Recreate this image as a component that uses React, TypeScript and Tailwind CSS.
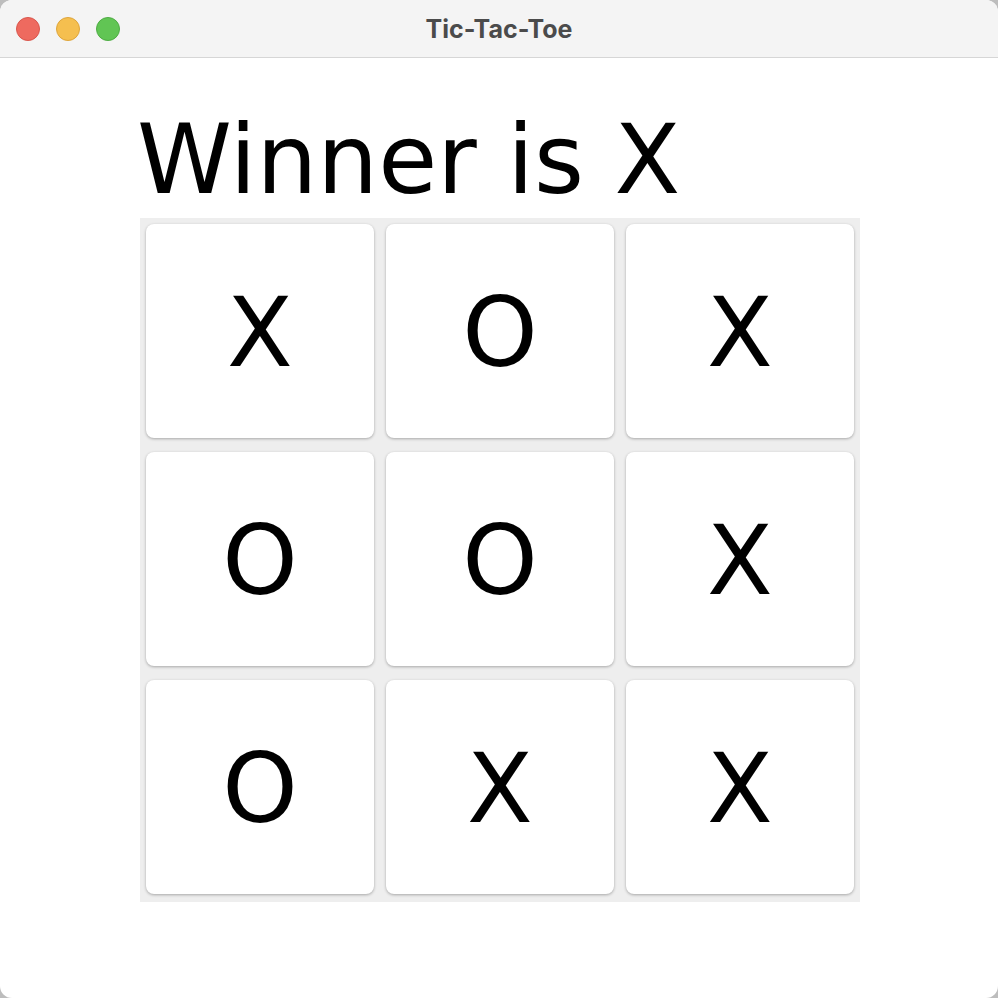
const board = ['X', 'O', 'X', 'O', 'O', 'X', 'O', 'X', 'X'];

export default function App() {
  return (
    <div className="h-[998px] w-[998px] bg-[#bdbdbd]">
      <div className="flex h-full w-full flex-col overflow-hidden rounded-[12px] bg-white">
        <div className="relative flex h-[58px] flex-none items-center border-b border-[#d6d6d6] bg-[#f4f4f4]">
          <div className="flex gap-[16px] pl-[16px]">
            <span className="h-[24px] w-[24px] rounded-full border border-[#d9564c] bg-[#ee6a5f]" />
            <span className="h-[24px] w-[24px] rounded-full border border-[#dea53b] bg-[#f5bf4f]" />
            <span className="h-[24px] w-[24px] rounded-full border border-[#4eac43] bg-[#61c554]" />
          </div>
          <div className="absolute inset-x-0 top-0 flex h-full items-center justify-center pt-[2px] font-['Inter',sans-serif] text-[25px] font-bold text-[#4b4b4b]">
            Tic-Tac-Toe
          </div>
        </div>
        <div className="flex flex-col pl-[140px] pt-[44px]">
          <h1 className="-ml-[3px] font-['DejaVu_Sans',sans-serif] text-[96px] leading-[116px] text-black">
            Winner is X
          </h1>
          <div className="grid w-[720px] grid-cols-3 gap-x-[12px] gap-y-[14px] bg-[#eeeeee] px-[6px] pb-[8px] pt-[6px]">
            {board.map((v, i) => (
              <div
                key={i}
                className="flex h-[214px] items-center justify-center rounded-[8px] bg-white pt-[4px] font-['DejaVu_Sans',sans-serif] text-[96px] text-black shadow-[0_1px_3px_rgba(0,0,0,0.3)]"
              >
                {v}
              </div>
            ))}
          </div>
        </div>
      </div>
    </div>
  );
}
